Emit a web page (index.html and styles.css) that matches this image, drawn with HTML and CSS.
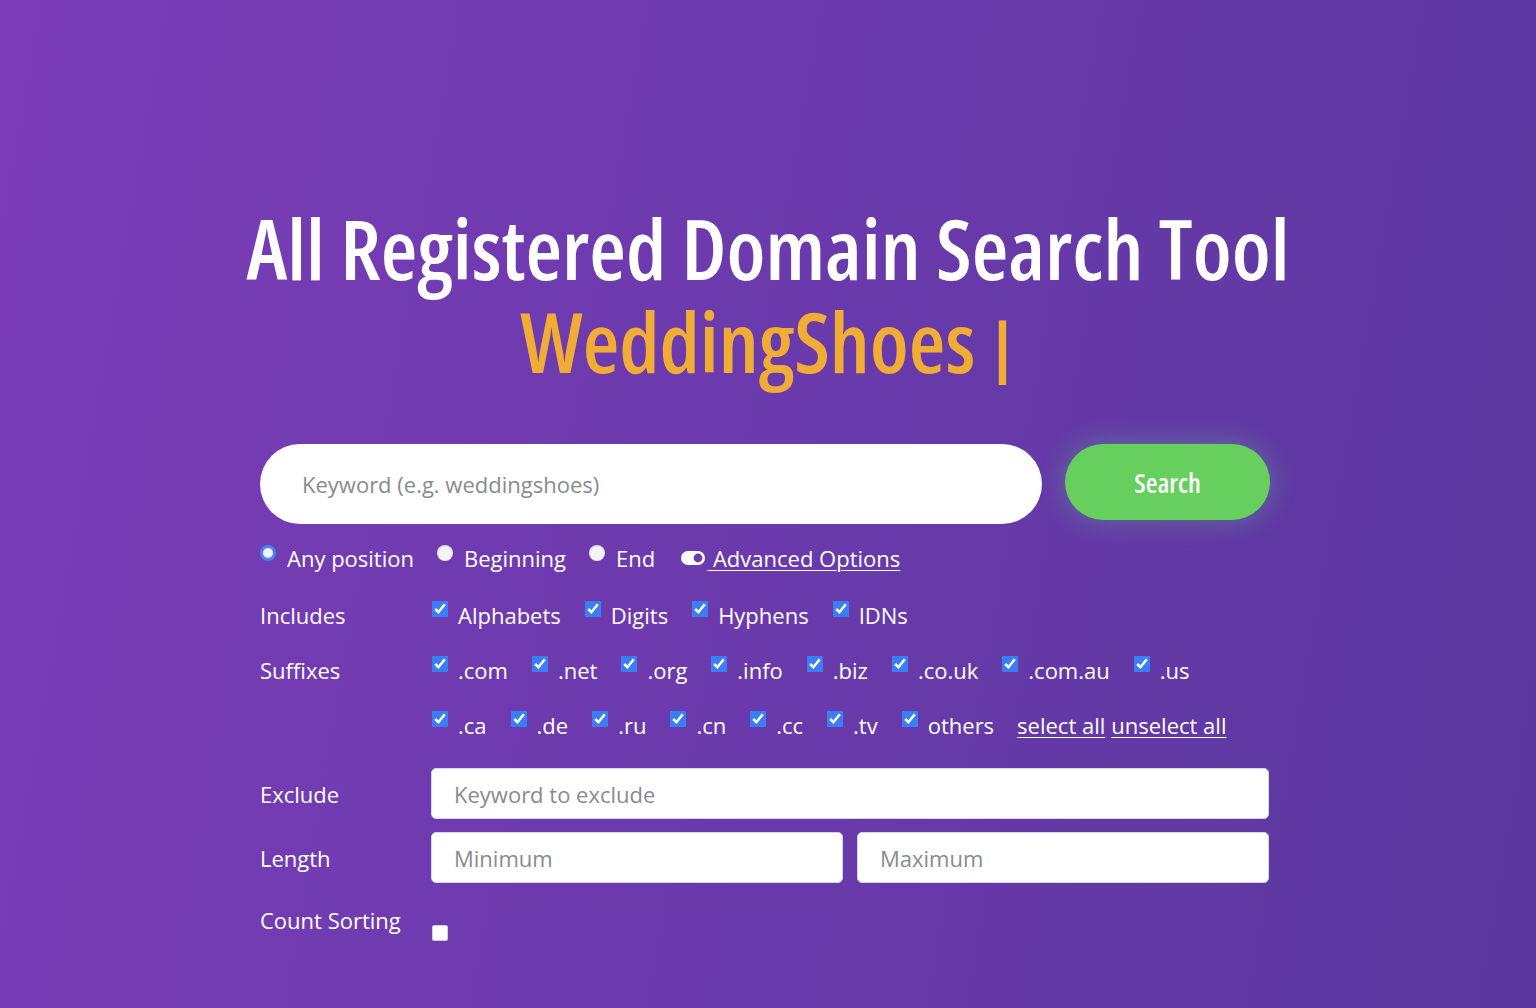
FILE: index.html
```html
<!DOCTYPE html>
<html lang="en">
<head>
<meta charset="utf-8">
<title>All Registered Domain Search Tool</title>
<link rel="stylesheet" href="styles.css">
</head>
<body>
<main class="hero">
  <h1 class="title">All Registered Domain Search Tool</h1>
  <div class="typed"><span class="typed-word">WeddingShoes</span><span class="cursor">|</span></div>

  <form class="search-form">
    <div class="search-row">
      <input class="keyword" type="text" placeholder="Keyword (e.g. weddingshoes)">
      <button class="search-btn" type="button">Search</button>
    </div>

    <div class="positions">
      <label class="pos"><input class="radio" type="radio" name="pos" checked>Any position</label>
      <label class="pos"><input class="radio" type="radio" name="pos">Beginning</label>
      <label class="pos"><input class="radio" type="radio" name="pos">End</label>
      <a class="adv" href="#">
        <svg class="toggle" viewBox="0 0 24 14" width="24" height="14" aria-hidden="true">
          <path fill="#fff" fill-rule="evenodd" d="M7 0h10a7 7 0 0 1 0 14H7A7 7 0 0 1 7 0zM17 2.6a4.4 4.4 0 1 0 0 8.8a4.4 4.4 0 1 0 0-8.8z"/>
        </svg><span class="adv-text">&nbsp;Advanced Options</span>
      </a>
    </div>

    <div class="opt-row first">
      <div class="opt-label">Includes</div>
      <div class="opt-body">
        <div class="checks">
          <label class="chk"><input type="checkbox" checked>Alphabets</label>
          <label class="chk"><input type="checkbox" checked>Digits</label>
          <label class="chk"><input type="checkbox" checked>Hyphens</label>
          <label class="chk"><input type="checkbox" checked>IDNs</label>
        </div>
      </div>
    </div>

    <div class="opt-row">
      <div class="opt-label">Suffixes</div>
      <div class="opt-body">
        <div class="checks">
          <label class="chk"><input type="checkbox" checked>.com</label>
          <label class="chk"><input type="checkbox" checked>.net</label>
          <label class="chk"><input type="checkbox" checked>.org</label>
          <label class="chk"><input type="checkbox" checked>.info</label>
          <label class="chk"><input type="checkbox" checked>.biz</label>
          <label class="chk"><input type="checkbox" checked>.co.uk</label>
          <label class="chk"><input type="checkbox" checked>.com.au</label>
          <label class="chk"><input type="checkbox" checked>.us</label>
        </div>
        <div class="checks next">
          <label class="chk"><input type="checkbox" checked>.ca</label>
          <label class="chk"><input type="checkbox" checked>.de</label>
          <label class="chk"><input type="checkbox" checked>.ru</label>
          <label class="chk"><input type="checkbox" checked>.cn</label>
          <label class="chk"><input type="checkbox" checked>.cc</label>
          <label class="chk"><input type="checkbox" checked>.tv</label>
          <label class="chk"><input type="checkbox" checked>others</label>
          <a class="sel" href="#">select all</a><a class="sel unsel" href="#">unselect all</a>
        </div>
      </div>
    </div>

    <div class="opt-row field exclude">
      <div class="opt-label">Exclude</div>
      <div class="opt-body">
        <input class="box" type="text" placeholder="Keyword to exclude">
      </div>
    </div>

    <div class="opt-row field length">
      <div class="opt-label">Length</div>
      <div class="opt-body pair">
        <input class="box" type="text" placeholder="Minimum">
        <input class="box" type="text" placeholder="Maximum">
      </div>
    </div>

    <div class="opt-row sorting">
      <div class="opt-label">Count Sorting</div>
      <div class="opt-body">
        <input class="plain-check" type="checkbox">
      </div>
    </div>
  </form>
</main>
</body>
</html>
```
FILE: styles.css
```css
html, body {
  margin: 0;
  padding: 0;
}

body {
  min-height: 100vh;
  background: linear-gradient(100deg, #7b3db8 0%, #6a3aac 50%, #5a389f 100%);
  font-family: "Open Sans", "DejaVu Sans", sans-serif;
  color: #fff;
  overflow: hidden;
}

.hero {
  width: 1016px;
  margin: 0 auto;
  padding-top: 201px;
}

.title,
.typed {
  margin: 0 -200px;
  text-align: center;
  white-space: nowrap;
  font-family: "Open Sans", sans-serif;
  font-weight: 600;
  font-stretch: 75%;
  font-size: 84px;
  line-height: 93px;
  letter-spacing: 0;
}

.title {
  color: #fff;
}

.typed {
  height: 93px;
  color: #efad36;
}

.cursor {
  display: inline-block;
  margin-left: 14px;
  font-size: 64px;
  line-height: 60px;
  font-weight: 700;
  vertical-align: 3px;
}

.search-row {
  display: flex;
  align-items: flex-start;
  gap: 23px;
  margin-top: 57px;
}

.keyword {
  box-sizing: border-box;
  width: 782px;
  height: 80px;
  border: none;
  border-radius: 40px;
  padding: 0 42px;
  background: #fff;
  font-family: "Open Sans", sans-serif;
  font-size: 22px;
  color: #333;
  outline: none;
}

.keyword::placeholder,
.box::placeholder {
  color: #878b93;
}

.search-btn {
  width: 205px;
  height: 76px;
  border: none;
  border-radius: 38px;
  background: #66cf5d;
  color: #fff;
  font-family: "Open Sans", sans-serif;
  font-weight: 600;
  font-stretch: 75%;
  font-size: 27px;
  box-shadow: 0 0 26px rgba(90, 190, 140, 0.45);
  cursor: pointer;
}

.positions {
  display: flex;
  align-items: flex-start;
  margin-top: 19px;
  font-size: 22px;
  line-height: 30px;
}

.pos {
  display: flex;
  align-items: flex-start;
  margin-right: 23px;
}

.radio {
  appearance: none;
  -webkit-appearance: none;
  box-sizing: border-box;
  width: 16px;
  height: 16px;
  margin: 2px 11px 0 0;
  border-radius: 50%;
  background: #f3f3f5;
  box-shadow: inset 0 1px 2px rgba(0, 0, 0, 0.15);
}

.radio:checked {
  background: #eef3ff;
  border: 3px solid #4a84f3;
  box-shadow: none;
}

.adv {
  display: flex;
  align-items: flex-start;
  color: #fff;
  text-decoration: none;
  font-size: 22px;
}

.toggle {
  margin-top: 8px;
  margin-left: 3px;
  margin-right: 2px;
}

.adv-text {
  text-decoration: underline;
  text-underline-offset: 3px;
  text-decoration-thickness: 1px;
}

.opt-row {
  display: flex;
  align-items: flex-start;
  margin-top: 25px;
  font-size: 22px;
  line-height: 30px;
}

.opt-row.first {
  margin-top: 27px;
}

.opt-label {
  width: 171px;
  flex: none;
}

.opt-body {
  width: 838px;
}

.checks {
  display: flex;
  align-items: flex-start;
}

.checks.next {
  margin-top: 25px;
}

.chk {
  display: flex;
  align-items: flex-start;
  margin-right: 23px;
}

.chk input {
  width: 16px;
  height: 16px;
  margin: 1px 10px 0 1px;
  accent-color: #3a7ef5;
}

.sel {
  color: #fff;
  text-decoration: underline;
  text-underline-offset: 3px;
  text-decoration-thickness: 1px;
}

.unsel {
  margin-left: 6px;
}

.opt-row.field {
  align-items: center;
}

.exclude {
  margin-top: 28px;
}

.length {
  margin-top: 13px;
}

.pair {
  display: flex;
  gap: 14px;
}

.box {
  box-sizing: border-box;
  width: 100%;
  height: 51px;
  border: 1px solid #d6d6dc;
  border-radius: 5px;
  padding: 0 22px;
  background: #fff;
  font-family: "Open Sans", sans-serif;
  font-size: 22px;
  color: #333;
  outline: none;
}

.sorting {
  margin-top: 22px;
}

.plain-check {
  appearance: none;
  -webkit-appearance: none;
  display: block;
  width: 16px;
  height: 16px;
  margin: 20px 0 0 1px;
  border: 1px solid #cfcfd6;
  border-radius: 2px;
  background: #fff;
  box-sizing: border-box;
}
```
